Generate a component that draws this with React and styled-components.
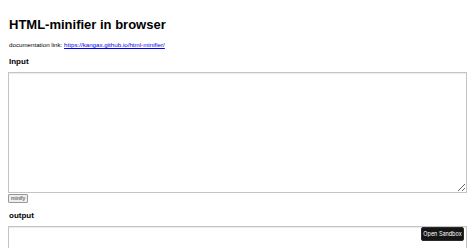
import styled, { createGlobalStyle } from "styled-components";

const GlobalStyle = createGlobalStyle`
  html, body {
    margin: 0;
    padding: 0;
    background: #fff;
  }
  body {
    padding: 8px;
    font-family: "Liberation Sans", Arial, sans-serif;
    color: #000;
  }
`;

export default function App() {
  return (
    <Page>
      <GlobalStyle />
      <Title>HTML-minifier in browser</Title>
      <DocLine>
        documentation link:{" "}
        <DocLink href="https://kangax.github.io/html-minifier/">
          https://kangax.github.io/html-minifier/
        </DocLink>
      </DocLine>
      <Label>Input</Label>
      <Area />
      <MinifyButton>minify</MinifyButton>
      <Label>output</Label>
      <Area readOnly />
      <SandboxButton>Open Sandbox</SandboxButton>
    </Page>
  );
}

const Page = styled.div`
  display: flex;
  flex-direction: column;
  align-items: flex-start;
  padding-left: 1px;
`;

const Title = styled.h2`
  margin: 9px 0 0;
  font-size: 13px;
  line-height: 16px;
  font-weight: bold;
`;

const DocLine = styled.p`
  margin: 8px 0 0;
  font-size: 6.2px;
  line-height: 8px;
`;

const DocLink = styled.a`
  color: #0000ee;
  text-decoration: underline;
`;

const Label = styled.h4`
  margin: 8px 0 0;
  font-size: 8px;
  line-height: 10px;
  font-weight: bold;
`;

const Area = styled.textarea`
  display: block;
  box-sizing: border-box;
  margin: 5px 0 0 -1px;
  width: 459px;
  height: 121px;
  border: 1px solid #c4c4c4;
  box-shadow: inset 0 1px 1px rgba(0, 0, 0, 0.08);
  background: #fff;
  flex-shrink: 0;
`;

const MinifyButton = styled.button`
  margin: 1px 0 0 -1px;
  padding: 0 2px;
  height: 9px;
  font-family: "Liberation Sans", Arial, sans-serif;
  font-size: 5.5px;
  line-height: 7px;
  color: #333;
  background: #efefef;
  border: 1px solid #999;
  border-radius: 1px;
`;

const SandboxButton = styled.button`
  position: fixed;
  right: 10px;
  bottom: 7px;
  width: 43px;
  height: 14px;
  padding: 0;
  font-family: Inter, "Liberation Sans", sans-serif;
  font-size: 5.5px;
  color: #fff;
  background: #151515;
  border: 1px solid #2a2a2a;
  border-radius: 2px;
`;
